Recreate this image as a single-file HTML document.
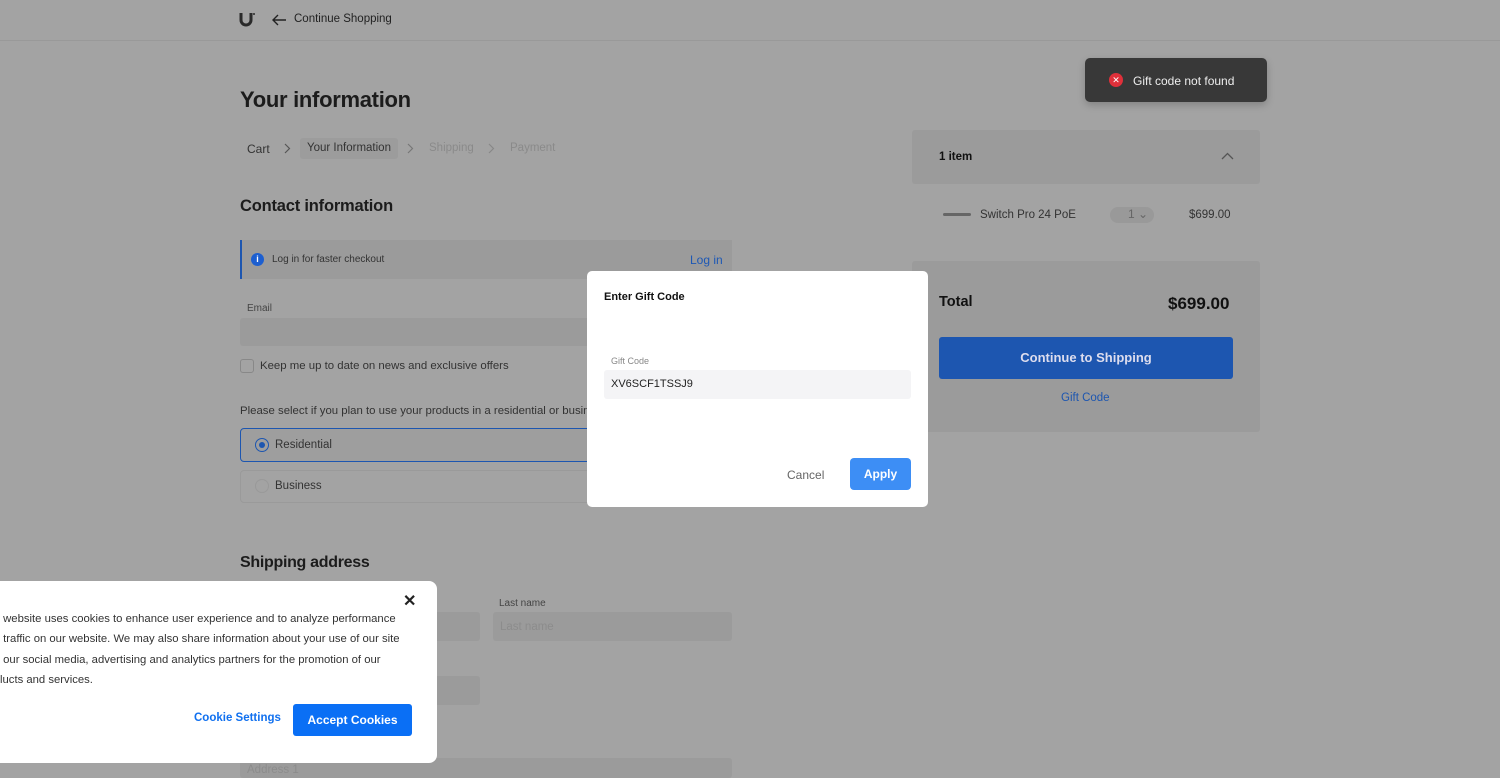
<!DOCTYPE html>
<html><head><meta charset="utf-8"><style>
*{box-sizing:border-box;margin:0;padding:0}
body{width:1500px;height:778px;overflow:hidden;background:#a3a3a3;font-family:"Liberation Sans",sans-serif;color:#222;position:relative}
.a{position:absolute;white-space:nowrap}
.fld{position:absolute;background:#9b9b9b;border-radius:3px}
</style></head><body>
<div class="a" style="left:0;top:40px;width:1500px;height:1px;background:#999"></div>
<svg class="a" style="left:239px;top:11px" width="18" height="18" viewBox="0 0 18 18"><path d="M2 2v7a5 5 0 0 0 10 0V2" fill="none" stroke="#2a2a2a" stroke-width="3"/><circle cx="15" cy="3" r="1" fill="#2a2a2a"/></svg>
<svg class="a" style="left:271px;top:13px" width="16" height="14" viewBox="0 0 16 14"><path d="M15 7H2M7 2L2 7l5 5" fill="none" stroke="#222" stroke-width="1.4"/></svg>
<div class="a" style="left:294px;top:13px;font-size:11.5px;color:#222">Continue Shopping</div>
<div class="a" style="left:240px;top:87px;font-size:22px;font-weight:bold;color:#1c1c1c;letter-spacing:-0.3px">Your information</div>
<div class="a" style="left:300px;top:138px;width:98px;height:21px;background:#9c9c9c;border-radius:3px"></div>
<div class="a" style="left:247px;top:142px;font-size:12px;color:#333">Cart</div>
<svg class="a" style="left:283px;top:143px" width="8" height="11" viewBox="0 0 8 11"><path d="M2 1l4.5 4.5L2 10" fill="none" stroke="#555" stroke-width="1.2"/></svg>
<div class="a" style="left:307px;top:142px;font-size:11.5px;color:#333">Your Information</div>
<svg class="a" style="left:406px;top:143px" width="8" height="11" viewBox="0 0 8 11"><path d="M2 1l4.5 4.5L2 10" fill="none" stroke="#777" stroke-width="1.2"/></svg>
<div class="a" style="left:429px;top:142px;font-size:11.5px;color:#8a8a8a">Shipping</div>
<svg class="a" style="left:487px;top:143px" width="8" height="11" viewBox="0 0 8 11"><path d="M2 1l4.5 4.5L2 10" fill="none" stroke="#888" stroke-width="1.2"/></svg>
<div class="a" style="left:510px;top:142px;font-size:11.5px;color:#8a8a8a">Payment</div>
<div class="a" style="left:240px;top:197px;font-size:16.5px;font-weight:bold;color:#1c1c1c;letter-spacing:-0.2px">Contact information</div>
<div class="fld" style="left:240px;top:240px;width:492px;height:39px;border-radius:0"></div>
<div class="a" style="left:240px;top:240px;width:2px;height:39px;background:#1d56b0"></div>
<div class="a" style="left:251px;top:253px;width:13px;height:13px;border-radius:50%;background:#1d5fd0;color:#fff;font-size:9px;font-weight:bold;text-align:center;line-height:13px">i</div>
<div class="a" style="left:272px;top:254px;font-size:10px;color:#333">Log in for faster checkout</div>
<div class="a" style="left:690px;top:253px;font-size:12px;color:#1d58b5">Log in</div>
<div class="a" style="left:247px;top:303px;font-size:10px;color:#444">Email</div>
<div class="fld" style="left:240px;top:318px;width:492px;height:28px"></div>
<div class="a" style="left:240px;top:359px;width:14px;height:14px;border:1px solid #888;border-radius:3px"></div>
<div class="a" style="left:260px;top:360px;font-size:11.4px;color:#333">Keep me up to date on news and exclusive offers</div>
<div class="a" style="left:240px;top:405px;font-size:11.4px;color:#333">Please select if you plan to use your products in a residential or business setting</div>
<div class="a" style="left:240px;top:428px;width:492px;height:34px;border:1px solid #1d56b0;border-radius:4px;background:#9e9e9e"></div>
<div class="a" style="left:255px;top:438px;width:14px;height:14px;border:1px solid #1d56b0;border-radius:50%"><div style="margin:3px;width:6px;height:6px;border-radius:50%;background:#1d56b0"></div></div>
<div class="a" style="left:275px;top:439px;font-size:11.5px;color:#333">Residential</div>
<div class="a" style="left:240px;top:470px;width:492px;height:33px;border:1px solid #9a9a9a;border-radius:4px"></div>
<div class="a" style="left:255px;top:479px;width:14px;height:14px;border:1px solid #999;border-radius:50%"></div>
<div class="a" style="left:275px;top:480px;font-size:11.5px;color:#333">Business</div>
<div class="a" style="left:240px;top:554px;font-size:16px;font-weight:bold;color:#1c1c1c;letter-spacing:-0.3px">Shipping address</div>
<div class="a" style="left:499px;top:598px;font-size:10px;color:#444">Last name</div>
<div class="fld" style="left:493px;top:612px;width:239px;height:29px"></div>
<div class="a" style="left:500px;top:621px;font-size:11.5px;color:#8c8c8c">Last name</div>
<div class="fld" style="left:240px;top:758px;width:492px;height:20px"></div>
<div class="a" style="left:247px;top:764px;font-size:11.5px;color:#8c8c8c">Address 1</div>
<div class="fld" style="left:240px;top:612px;width:240px;height:29px"></div>
<div class="fld" style="left:240px;top:676px;width:240px;height:29px"></div>

<div class="fld" style="left:912px;top:130px;width:348px;height:54px;border-radius:3px"></div>
<div class="a" style="left:939px;top:151px;font-size:11.5px;font-weight:bold;color:#111">1 item</div>
<svg class="a" style="left:1221px;top:152px" width="13" height="8" viewBox="0 0 13 8"><path d="M1 7l5.5-5.5L12 7" fill="none" stroke="#555" stroke-width="1.3"/></svg>
<div class="a" style="left:943px;top:213px;width:28px;height:3px;background:#666;border-radius:2px"></div>
<div class="a" style="left:980px;top:209px;font-size:11.5px;color:#333">Switch Pro 24 PoE</div>
<div class="a" style="left:1110px;top:207px;width:44px;height:16px;background:#999;border-radius:8px"></div>
<div class="a" style="left:1128px;top:207px;font-size:12px;color:#666">1 ⌄</div>
<div class="a" style="left:1189px;top:209px;font-size:11.5px;color:#333">$699.00</div>
<div class="fld" style="left:912px;top:261px;width:348px;height:171px"></div>
<div class="a" style="left:939px;top:294px;font-size:14.5px;font-weight:bold;color:#111">Total</div>
<div class="a" style="left:1168px;top:294px;font-size:17px;font-weight:bold;color:#111">$699.00</div>
<div class="a" style="left:939px;top:337px;width:294px;height:42px;background:#1d56b0;border-radius:3px;color:#dde;font-size:13px;font-weight:bold;text-align:center;line-height:42px">Continue to Shipping</div>
<div class="a" style="left:1061px;top:392px;font-size:11.5px;color:#1d56b0">Gift Code</div>

<div class="a" style="left:1085px;top:58px;width:182px;height:44px;background:#383838;border-radius:5px;box-shadow:0 3px 8px rgba(0,0,0,.2)"></div>
<div class="a" style="left:1109px;top:73px;width:14px;height:14px;border-radius:50%;background:#e0303a;color:#fff;font-size:9px;text-align:center;line-height:14px">✕</div>
<div class="a" style="left:1133px;top:74px;font-size:12px;color:#eee">Gift code not found</div>

<div class="a" style="left:587px;top:271px;width:341px;height:236px;background:#fff;border-radius:5px"></div>
<div class="a" style="left:604px;top:291px;font-size:11px;font-weight:bold;color:#111">Enter Gift Code</div>
<div class="a" style="left:611px;top:356px;font-size:9px;color:#888">Gift Code</div>
<div class="a" style="left:604px;top:370px;width:307px;height:29px;background:#f4f4f6;border-radius:3px"></div>
<div class="a" style="left:611px;top:378px;font-size:11px;color:#222">XV6SCF1TSSJ9</div>
<div class="a" style="left:787px;top:468px;font-size:12px;color:#666">Cancel</div>
<div class="a" style="left:850px;top:458px;width:61px;height:32px;background:#3d8ef5;border-radius:4px;color:#fff;font-size:12px;font-weight:bold;text-align:center;line-height:32px">Apply</div>

<div class="a" style="left:0;top:581px;width:437px;height:182px;background:#fff;border-radius:0 8px 8px 0"></div>
<div class="a" style="left:403px;top:591px;font-size:16px;font-weight:bold;color:#222">✕</div>
<div class="a" style="left:0;top:609px;font-size:11.3px;color:#333;line-height:20.3px">&nbsp;website uses cookies to enhance user experience and to analyze performance<br>&nbsp;traffic on our website. We may also share information about your use of our site<br>&nbsp;our social media, advertising and analytics partners for the promotion of our<br>lucts and services.</div>
<div class="a" style="left:194px;top:712px;font-size:11.5px;font-weight:bold;color:#1070ef">Cookie Settings</div>
<div class="a" style="left:293px;top:704px;width:119px;height:32px;background:#0a6ff5;border-radius:3px;color:#fff;font-size:12px;font-weight:bold;text-align:center;line-height:32px">Accept Cookies</div>
</body></html>
